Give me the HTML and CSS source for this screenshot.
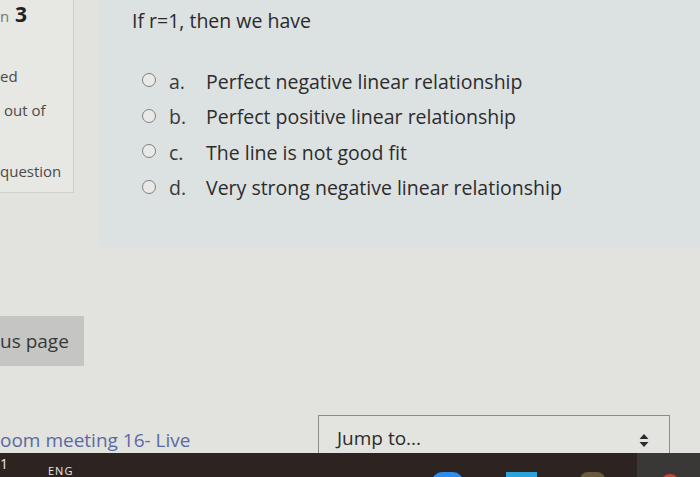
FILE: index.html
```html
<!DOCTYPE html>
<html>
<head>
<meta charset="utf-8">
<link rel="stylesheet" href="styles.css">
</head>
<body>
<div class="screen">
  <div class="top">
    <div class="info">
      <div class="qno"><span class="qn">n</span> <b>3</b></div>
      <div class="state">ed</div>
      <div class="marks">out of</div>
      <div class="flag">question</div>
    </div>
    <div class="qbox">
      <div class="qtext">If r=1, then we have</div>
      <div class="answers">
        <label class="opt"><span class="radio"></span><span class="let">a.</span><span class="ans">Perfect negative linear relationship</span></label>
        <label class="opt"><span class="radio"></span><span class="let">b.</span><span class="ans">Perfect positive linear relationship</span></label>
        <label class="opt"><span class="radio"></span><span class="let">c.</span><span class="ans">The line is not good fit</span></label>
        <label class="opt"><span class="radio"></span><span class="let">d.</span><span class="ans">Very strong negative linear relationship</span></label>
      </div>
    </div>
  </div>
  <div class="prev">us page</div>
  <div class="navrow">
    <a class="link">oom meeting 16- Live</a>
    <div class="jump">
      <span>Jump to...</span>
      <svg class="arrows" width="10" height="15" viewBox="0 0 10 15"><path d="M5 1 L9.5 6 H0.5 Z M5 14 L9.5 9 H0.5 Z" fill="#2b2b2b"/></svg>
    </div>
  </div>
  <div class="taskbar">
    <span class="clock">1</span>
    <span class="eng">ENG</span>
    <span class="ico ico-blue"></span>
    <span class="ico ico-cyan"></span>
    <span class="ico ico-yel"></span>
    <div class="tray"><span class="ico ico-red"></span></div>
  </div>
</div>
</body>
</html>
```
FILE: styles.css
```css
html, body { margin: 0; padding: 0; }
body {
  background: #e1e1dd;
  font-family: "Open Sans", "Noto Sans", sans-serif;
  color: #2e2e2e;
}
.screen {
  width: 700px;
  height: 477px;
  overflow: hidden;
  display: flex;
  flex-direction: column;
  background: #e2e2de;
}
.top {
  display: flex;
  gap: 25px;
  height: 247px;
  flex: none;
}
.info {
  width: 74px;
  height: 193px;
  background: #e7e7e4;
  border-right: 1px solid #cfcfcb;
  border-bottom: 1px solid #cfcfcb;
  box-sizing: border-box;
  font-size: 15px;
  color: #4a4a4a;
}
.qno { line-height: 28px; font-size: 15px; }
.qn { color: #777; }
.qno b { font-size: 21px; color: #222; font-weight: 700; margin-left: 2px; }
.state { margin-top: 36px; line-height: 20px; }
.marks { margin-top: 14px; padding-left: 4px; line-height: 20px; }
.flag { margin-top: 41px; line-height: 20px; }
.qbox {
  flex: 1;
  background: #dce1e2;
  padding: 7px 0 0 33px;
  box-sizing: border-box;
}
.qtext { font-size: 19.5px; line-height: 28px; color: #2a2a2a; }
.answers { margin-top: 33px; padding-left: 10px; display: flex; flex-direction: column; gap: 9.5px; }
.opt { display: flex; align-items: center; height: 26px; font-size: 19.5px; color: #2c2c2c; }
.radio {
  width: 12px; height: 12px;
  border: 1.5px solid #80807e;
  border-radius: 50%;
  background: #e9e9e7;
  flex: none;
  margin-top: -2px;
}
.let { width: 37px; margin-left: 13px; color: #3a3a3a; }
.ans { white-space: nowrap; }
.prev {
  margin-top: 69px;
  width: 84px;
  height: 50px;
  background: #c5c6c3;
  font-size: 19px;
  line-height: 50px;
  color: #383838;
  flex: none;
}
.navrow {
  margin-top: 49px;
  display: flex;
  align-items: flex-end;
  height: 38px;
  flex: none;
}
.link {
  font-size: 19px;
  color: #5a6aa3;
  line-height: 26px;
  width: 318px;
  white-space: nowrap;
}
.jump {
  width: 352px;
  height: 38px;
  border: 1px solid #8c8c8a;
  border-bottom: none;
  box-sizing: border-box;
  display: flex;
  align-items: flex-end;
  justify-content: space-between;
  padding: 0 20px 2px 18px;
  font-size: 19px;
  color: #2c2c2c;
  background: #e3e3df;
}
.jump span { line-height: 26px; }
.arrows { margin-bottom: 3px; }
.taskbar {
  height: 24px;
  flex: none;
  background: #2d2422;
  display: flex;
  color: #e8e8e8;
  overflow: hidden;
}
.clock { font-size: 14px; line-height: 16px; padding-top: 3px; width: 48px; }
.eng { font-size: 11px; padding-top: 12px; line-height: 12px; width: 384px; letter-spacing: 1px; }
.ico { display: block; margin-top: 19px; width: 31px; height: 12px; flex: none; }
.ico-blue { background: #2d8cf0; border-radius: 10px 10px 0 0; margin-right: 43px; }
.ico-cyan { background: #2aa4d8; margin-right: 43px; }
.ico-yel { background: #6b5a3a; width: 25px; border-radius: 8px 8px 0 0; }
.tray { margin-left: auto; width: 63px; background: #3a3837; }
.ico-red { background: #c8462e; width: 20px; margin-top: 21px; margin-left: 23px; border-radius: 10px 10px 0 0; }
```
